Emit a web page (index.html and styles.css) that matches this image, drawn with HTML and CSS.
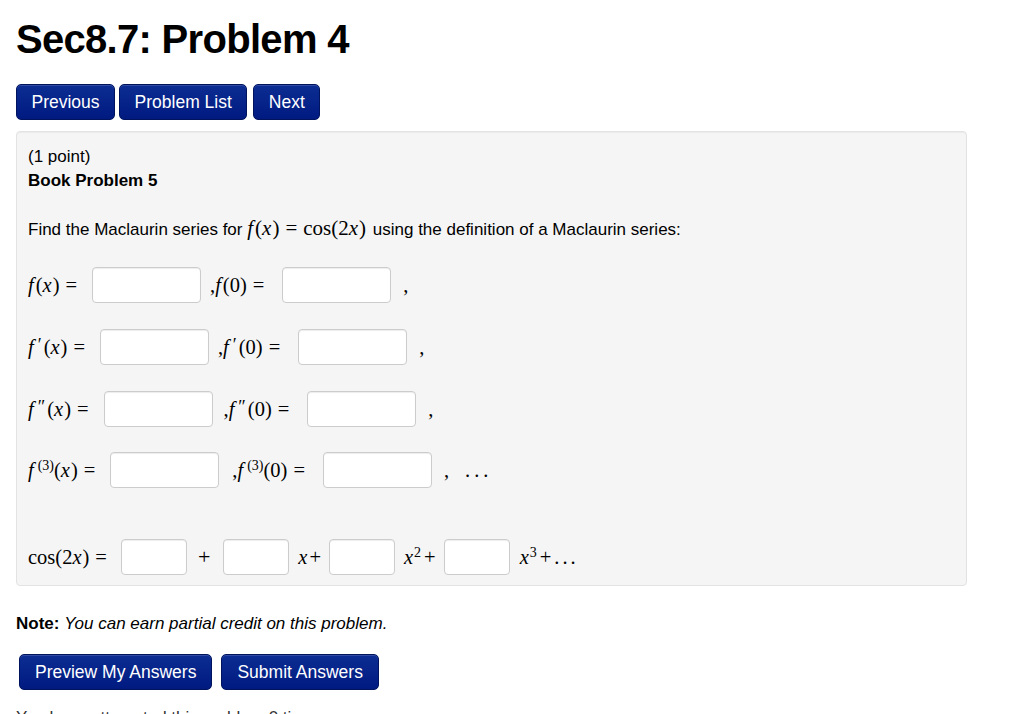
FILE: index.html
```html
<!DOCTYPE html>
<html>
<head>
<meta charset="utf-8">
<title>Sec8.7: Problem 4</title>
<link rel="stylesheet" href="styles.css">
</head>
<body>
<h1 class="title">Sec8.7: Problem 4</h1>
<div class="nav">
  <span class="btn nb">Previous</span>
  <span class="btn nb">Problem List</span>
  <span class="btn nb">Next</span>
</div>
<div class="well">
  <div class="line">(1 point)</div>
  <div class="line bold">Book Problem 5</div>
  <div class="line desc">Find the Maclaurin series for <span class="m dm"><i class="f">f</i>(<i class="x">x</i>)<span class="eq">=</span>cos(2<i class="x">x</i>)</span> using the definition of a Maclaurin series:</div>

  <div class="row r1">
    <span class="m"><i class="f">f</i>(<i class="x">x</i>)<span class="eq">=</span></span>
    <span class="in a"></span>
    <span class="m sep">,<i class="f">f</i>(0)<span class="eq">=</span></span>
    <span class="in"></span>
    <span class="m tail">,</span>
  </div>
  <div class="row r2">
    <span class="m"><i class="f">f</i><span class="pr">′</span>(<i class="x">x</i>)<span class="eq">=</span></span>
    <span class="in a"></span>
    <span class="m sep">,<i class="f">f</i><span class="pr">′</span>(0)<span class="eq">=</span></span>
    <span class="in"></span>
    <span class="m tail">,</span>
  </div>
  <div class="row r3">
    <span class="m"><i class="f">f</i><span class="pr">″</span>(<i class="x">x</i>)<span class="eq">=</span></span>
    <span class="in a"></span>
    <span class="m sep s3">,<i class="f">f</i><span class="pr">″</span>(0)<span class="eq">=</span></span>
    <span class="in"></span>
    <span class="m tail">,</span>
  </div>
  <div class="row r4">
    <span class="m"><i class="f">f</i><span class="sup">(3)</span>(<i class="x">x</i>)<span class="eq">=</span></span>
    <span class="in a"></span>
    <span class="m sep s4">,<i class="f">f</i><span class="sup">(3)</span>(0)<span class="eq">=</span></span>
    <span class="in"></span>
    <span class="m tail">,</span>
    <span class="m dots">...</span>
  </div>
  <div class="row r5">
    <span class="m">cos(2<i class="x">x</i>)<span class="eq">=</span></span>
    <span class="in sm first"></span>
    <span class="m plus">+</span>
    <span class="in sm"></span>
    <span class="m term"><i class="x">x</i><span class="op">+</span></span>
    <span class="in sm t2"></span>
    <span class="m term"><i class="x">x</i><span class="pow">2</span><span class="op">+</span></span>
    <span class="in sm t3"></span>
    <span class="m term last"><i class="x">x</i><span class="pow">3</span><span class="op">+</span><span class="ld">...</span></span>
  </div>
</div>
<div class="line note"><b>Note:</b> <i>You can earn partial credit on this problem.</i></div>
<div class="actions">
  <span class="btn">Preview My Answers</span>
  <span class="btn">Submit Answers</span>
</div>
<div class="line foot">You have attempted this problem 0 times.</div>
</body>
</html>
```

FILE: styles.css
```css
html, body {
  margin: 0;
  padding: 0;
  background: #ffffff;
}
body {
  padding: 0 16px;
  font-family: "Liberation Sans", Arial, Helvetica, sans-serif;
  font-size: 17px;
  line-height: 24px;
  color: #000000;
  overflow: hidden;
}
.title {
  margin: 17px 0 0;
  font-size: 40px;
  line-height: 44px;
  letter-spacing: -0.7px;
  font-weight: bold;
}
.nav {
  margin-top: 23px;
  display: flex;
  gap: 4px;
}
.btn {
  display: inline-block;
  box-sizing: border-box;
  height: 36px;
  padding: 0 15px;
  line-height: 34px;
  font-size: 17.5px;
  color: #ffffff;
  border: 1px solid #00145e;
  border-radius: 5px;
  background: linear-gradient(#0c2d93, #001a80);
  box-shadow: inset 0 1px 0 rgba(255,255,255,0.15);
}
.btn.nb {
  padding: 0 14.5px;
}
.btn.nb:last-child {
  margin-left: 2px;
}
.well {
  margin-top: 11px;
  width: 951px;
  box-sizing: border-box;
  border: 1px solid #e3e3e3;
  border-radius: 4px;
  background: #f5f5f5;
  padding: 13px 11px 10px;
  box-shadow: inset 0 1px 1px rgba(0,0,0,0.04);
}
.line {
  line-height: 24px;
}
.bold {
  font-weight: bold;
}
.desc {
  margin-top: 25px;
}
.m {
  font-family: "Liberation Serif", "Times New Roman", serif;
  font-size: 20.5px;
  line-height: 1;
  white-space: nowrap;
}
.m.dm {
  font-size: 21px;
  margin-right: 2px;
}
.m i {
  font-style: italic;
}
.m i.f {
  margin-right: 2px;
}
.m i.x {
  margin-right: 1px;
}
.eq {
  margin: 0 6px;
}
.pr {
  display: inline-block;
  margin-left: 2px;
  margin-right: 2px;
  font-size: 18px;
  position: relative;
  top: -3px;
}
.sup, .pow {
  font-size: 14px;
  position: relative;
  top: -7px;
  margin-left: 2px;
}
.pow {
  margin-left: 0;
  margin-right: 2px;
}
.op {
  margin: 0 3px 0 1px;
}
.ld {
  letter-spacing: 3px;
}
.row {
  display: flex;
  align-items: center;
  height: 36px;
}
.r1 { margin-top: 25px; }
.r2 { margin-top: 26px; }
.r3 { margin-top: 26px; }
.r4 { margin-top: 25px; }
.r5 { margin-top: 51px; }
.in {
  display: block;
  box-sizing: border-box;
  width: 109px;
  height: 36px;
  margin-left: 12px;
  background: #ffffff;
  border: 1px solid #cccccc;
  border-radius: 4px;
  box-shadow: inset 0 1px 1px rgba(0,0,0,0.075);
}
.in.a {
  margin-left: 9px;
}
.in.sm {
  width: 66px;
}
.in.first {
  margin-left: 8px;
}
.in.t2 {
  margin-left: 5px;
}
.in.t3 {
  margin-left: 5px;
}
.sep {
  margin-left: 9px;
}
.sep.s3 {
  margin-left: 11px;
}
.sep.s4 {
  margin-left: 13px;
}
.tail {
  margin-left: 12px;
}
.dots {
  margin-left: 16px;
  letter-spacing: 4px;
}
.plus {
  margin-left: 11px;
  margin-right: 1px;
  font-size: 22px;
}
.term {
  margin-left: 9px;
}
.term.last {
  margin-left: 10px;
}
.note {
  margin-top: 26px;
}
.actions {
  margin-top: 18px;
  margin-left: 3px;
  display: flex;
  gap: 9px;
}
.foot {
  margin-top: 16px;
  color: #333333;
}
```
